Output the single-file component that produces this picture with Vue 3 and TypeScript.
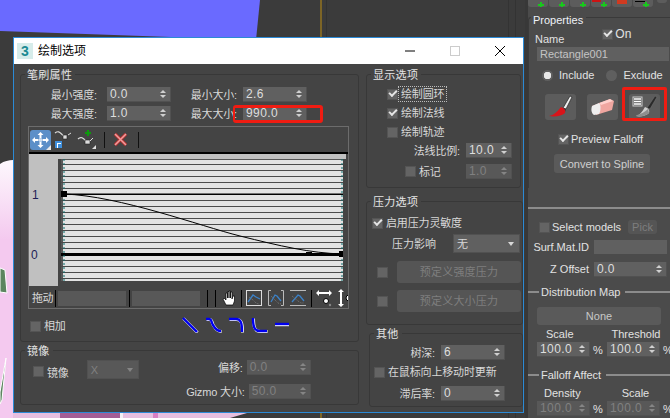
<script setup lang="ts">
const graphLines: number[] = Array.from({ length: 20 }, (_, i) => 163 + i * 6)
</script>

<template>
  <div class="stage">
    <svg class="scene" viewBox="0 0 670 418" width="670" height="418">
      <defs>
        <linearGradient id="pink" x1="0" y1="160" x2="0" y2="240" gradientUnits="userSpaceOnUse">
          <stop offset="0" stop-color="#fdf8fd" />
          <stop offset="1" stop-color="#f4c9ef" />
        </linearGradient>
      </defs>
      <rect width="670" height="418" fill="#3b3b3b" />
      <polygon points="0,0 260,0 256,40 0,31" fill="#6a6aff" />
      <rect x="320" y="0" width="2" height="418" fill="#7d6526" />
      <rect x="326" y="0" width="1" height="418" fill="#333" />
      <rect x="508" y="0" width="1" height="418" fill="#333" />
      <rect x="515" y="0" width="1" height="418" fill="#333" />
      <path d="M0 164C4 161 9 160 13 160V418H0z" fill="url(#pink)" />
      <polygon points="13,405 247,413 230,418 13,418" fill="#e6bfe0" />
      <rect x="60" y="413" width="60" height="5" fill="#a35f96" />
      <rect x="120" y="413" width="3" height="5" fill="#f4f0f4" />
      <rect x="153" y="413" width="5" height="5" fill="#d880c4" />
      <polygon points="0,268 5,270 7,293 0,292" fill="#5c8560" stroke="#fff" stroke-width="1" />
      <polygon points="0,392 6,358 2,400 0,404" fill="#5c8560" stroke="#fff" stroke-width="1" />
    </svg>

    <div class="dialog">
      <header class="title">
        <span class="logo">3</span>
        <span class="title-text">绘制选项</span>
        <span class="win-btns">
          <svg width="12" height="12" viewBox="0 0 12 12"><path d="M1 6h10" stroke="#000" /></svg>
          <svg width="12" height="12" viewBox="0 0 12 12"><rect x="1.5" y="1.5" width="9" height="9" fill="none" stroke="#ccc" /></svg>
          <svg width="12" height="12" viewBox="0 0 12 12"><path d="M1 1l10 10M11 1L1 11" stroke="#000" /></svg>
        </span>
      </header>

      <div class="dlg-body">
        <div class="col-left">
          <section class="group brush">
            <span class="legend">笔刷属性</span>
            <div class="brush-grid">
              <label class="lb lb1">最小强度:</label>
              <div class="spin">0.0</div>
              <label class="lb lb2">最小大小:</label>
              <div class="spin">2.6</div>
              <label class="lb lb1">最大强度:</label>
              <div class="spin">1.0</div>
              <label class="lb lb2">最大大小:</label>
              <div class="spin">990.0</div>
            </div>
            <span class="mark mark-size"></span>

            <div class="editor">
              <div class="ed-tools">
                <span class="tool-active">
                  <svg width="21" height="20" viewBox="0 0 21 20">
                    <path d="M10.5 2l3 3h-2v3.500h-2V5h-2zM10.500 18l3-3h-2v-3.500h-2V15h-2zM2 10l3-3v2h3.500v2H5v2zM19 10l-3-3v2h-3.500v2H16v2z" fill="#fff" />
                    <rect x="9" y="8.500" width="3" height="3" fill="#cfe0f2" />
                    <path d="M16 20l5-5v5z" fill="#e8e8e8" />
                  </svg>
                </span>
                <svg width="18" height="22" viewBox="0 0 18 22" class="t1">
                  <path d="M1 4c4-3 5 0 9 3" fill="none" stroke="#ddd" stroke-width="1.200" />
                  <rect x="9" y="6" width="4" height="4" fill="#ddd" stroke="#222" stroke-width=".6" />
                  <path d="M14 6l3-2" stroke="#ddd" />
                  <rect x="1" y="12" width="7" height="7" fill="#3f8fdc" />
                  <rect x="3" y="14" width="4" height="5" fill="#fff" />
                  <rect x="4" y="15" width="3" height="4" fill="#3f8fdc" />
                </svg>
                <svg width="20" height="22" viewBox="0 0 20 22" class="t2">
                  <path d="M1 10c3-3 5-1 8 2" fill="none" stroke="#ddd" stroke-width="1.200" />
                  <rect x="8" y="11" width="5" height="4" fill="#ddd" stroke="#222" stroke-width=".6" />
                  <path d="M13 12l3-3" stroke="#ddd" />
                  <path d="M10 1h2v2h2v2h-2v2h-2V5H8V3h2z" fill="#0c9a0c" />
                  <path d="M15 20l4-4v4z" fill="#e0e0e0" />
                </svg>
                <i class="vsep s1"></i>
                <svg width="15" height="15" viewBox="0 0 15 15" class="t3">
                  <path d="M2 2l11 11M13 2L2 13" stroke="#a33" stroke-width="3.400" />
                  <path d="M2 2l11 11M13 2L2 13" stroke="#f59a9a" stroke-width="1.600" />
                </svg>
                <i class="vsep s2"></i>
              </div>
              <svg class="plot" viewBox="29 153 317 132" width="317" height="132">
                <rect x="29" y="153" width="317" height="132" fill="#444" />
                <rect x="29" y="153" width="317" height="5" fill="#c0c0c0" />
                <rect x="29" y="153" width="29" height="132" fill="#c0c0c0" />
                <rect x="58" y="158" width="285" height="122" fill="#e2e2e2" />
                <rect x="61" y="158" width="2" height="122" fill="#5a5a5a" />
                <rect x="58" y="158" width="3" height="122" fill="#444" />
                <rect x="61" y="158" width="282" height="1" fill="#555" />
                <g v-for="y in graphLines" :key="y">
                  <rect x="61" :y="y" width="282" height="1" fill="#4a4a4a" />
                </g>
                <rect x="61" y="192.500" width="282" height="1.500" fill="#000" />
                <rect x="61" y="252" width="282" height="3" fill="#000" />
                <path d="M64 158v122M342 158v122" stroke="#0b6f6f" stroke-dasharray="2 2" />
                <path d="M64 193C120 195 200 225 240 235S310 252 342 253" fill="none" stroke="#000" />
                <rect x="61" y="190" width="6" height="6" fill="#000" />
                <rect x="339" y="250" width="4" height="6" fill="#000" />
                <rect x="306" y="251" width="6" height="3" fill="#000" />
                <text x="32" y="198" class="axis">1</text>
                <text x="31" y="258" class="axis">0</text>
              </svg>
              <div class="ed-bottom">
                <span class="drag">拖动</span>
                <i class="bsep"></i>
                <span class="field"></span>
                <i class="bsep b0"></i>
                <span class="field"></span>
                <i class="bsep b1"></i>
                <i class="bsep b2"></i>
                <svg class="hand" width="16" height="16" viewBox="0 0 16 16">
                  <path d="M4 15L1 9l1-1 2 2V3h1.500v5V1.500H7V8V1H8.500v7V2H10v7l1-3h1.500v5L11 15z" fill="#fff" stroke="#000" stroke-width=".7" />
                </svg>
                <i class="bsep b3"></i>
                <svg class="view" width="16" height="16" viewBox="0 0 16 16">
                  <rect x=".5" y=".5" width="15" height="15" fill="#444" stroke="#ddd" />
                  <path d="M2 12l5-7 3 2 4 2" fill="none" stroke="#3b82c9" stroke-width="1.300" />
                  <path d="M3 7l4 3 3 3 3 1" fill="none" stroke="#777" stroke-dasharray="1 1" />
                </svg>
                <svg class="view" width="16" height="16" viewBox="0 0 16 16">
                  <path d="M3 .5H.5v15H3M13 .5h2.500v15H13" fill="none" stroke="#bbb" />
                  <path d="M3 12l4-7 2 1 4 5" fill="none" stroke="#3b82c9" stroke-width="1.300" />
                  <path d="M3 6l4 4 3 3 3 1" fill="none" stroke="#777" stroke-dasharray="1 1" />
                </svg>
                <svg class="view" width="16" height="16" viewBox="0 0 16 16">
                  <path d="M0 .5h16M0 15.500h16" stroke="#bbb" />
                  <path d="M2 12l6-7 2 1 4 5" fill="none" stroke="#3b82c9" stroke-width="1.300" />
                  <path d="M2 6l6 5 3 2 3 0" fill="none" stroke="#777" stroke-dasharray="1 1" />
                </svg>
                <i class="bsep b4"></i>
                <svg class="fit1" width="16" height="18" viewBox="0 0 16 18">
                  <path d="M0 4l3-3v2h10V1l3 3-3 3V5H3v2z" fill="#fff" />
                  <circle cx="10" cy="12" r="2.500" fill="#fff" stroke="#000" />
                  <circle cx="14" cy="16" r="1.200" fill="#888" />
                </svg>
                <svg class="fit2" width="11" height="18" viewBox="0 0 11 18">
                  <path d="M3 0l3 3H4v12h2l-3 3-3-3h2V3H0z" fill="#fff" />
                  <path d="M11 6a3 3 0 0 0 0 6z" fill="#fff" stroke="#000" />
                </svg>
              </div>
            </div>

            <div class="add-row">
              <span class="chk"></span>
              <span class="chk-text">相加</span>
              <div class="shapes">
                <svg width="17" height="16" viewBox="0 0 17 16"><path d="M1 1l14 14" fill="none" stroke="#fff" stroke-width="3" transform="translate(.5 .5)" /><path d="M1 1l14 14" fill="none" stroke="#0000ee" stroke-width="2.400" /></svg>
                <svg width="17" height="16" viewBox="0 0 17 16"><path d="M1 2h3c3 0 2 3 4 6s3 6 8 6" fill="none" stroke="#fff" stroke-width="3" transform="translate(.5 .5)" /><path d="M1 2h3c3 0 2 3 4 6s3 6 8 6" fill="none" stroke="#0000ee" stroke-width="2.400" /></svg>
                <svg width="17" height="16" viewBox="0 0 17 16"><path d="M1 2h7c5 0 6 4 6 13" fill="none" stroke="#fff" stroke-width="3" transform="translate(.5 .5)" /><path d="M1 2h7c5 0 6 4 6 13" fill="none" stroke="#0000ee" stroke-width="2.400" /></svg>
                <svg width="17" height="16" viewBox="0 0 17 16"><path d="M2 1c0 8 1 13 7 13h7" fill="none" stroke="#fff" stroke-width="3" transform="translate(.5 .5)" /><path d="M2 1c0 8 1 13 7 13h7" fill="none" stroke="#0000ee" stroke-width="2.400" /></svg>
                <svg width="16" height="16" viewBox="0 0 16 16"><path d="M1 7h14" fill="none" stroke="#fff" stroke-width="3" transform="translate(0 .7)" /><path d="M1 7h14" fill="none" stroke="#0000ee" stroke-width="2.400" /></svg>
              </div>
            </div>
          </section>

          <section class="group mirror">
            <span class="legend">镜像</span>
            <div class="mirror-grid">
              <div class="mirror-left">
                <span class="chk"></span>
                <span class="chk-text">镜像</span>
                <div class="drop dis m-drop">X</div>
              </div>
              <div class="mirror-right">
                <div class="mr-row"><label class="lb">偏移:</label><div class="spin dis">0.0</div></div>
                <div class="mr-row"><label class="lb">Gizmo 大小:</label><div class="spin dis gz">50.0</div></div>
              </div>
            </div>
          </section>
        </div>

        <div class="col-right">
          <section class="group display">
            <span class="legend">显示选项</span>
            <div class="check-row"><span class="chk on"></span><span class="chk-text focus">绘制圆环</span></div>
            <div class="check-row"><span class="chk on"></span><span class="chk-text">绘制法线</span></div>
            <div class="check-row"><span class="chk"></span><span class="chk-text">绘制轨迹</span></div>
            <div class="scale-row"><label class="lb">法线比例:</label><div class="spin s46">10.0</div></div>
            <div class="mark-row">
              <span class="chk"></span><span class="chk-text">标记</span>
              <div class="spin s46 dis">1.0</div>
            </div>
          </section>

          <section class="group pressure">
            <span class="legend">压力选项</span>
            <div class="press-check"><span class="chk on"></span><span class="chk-text">启用压力灵敏度</span></div>
            <div class="press-drop"><label class="lb">压力影响</label><div class="drop p-drop">无</div></div>
            <div class="press-btn"><span class="chk"></span><button class="btn dis-btn">预定义强度压力</button></div>
            <div class="press-btn second"><span class="chk"></span><button class="btn dis-btn">预定义大小压力</button></div>
          </section>

          <section class="group other">
            <span class="legend">其他</span>
            <div class="oth-row"><label class="lb">树深:</label><div class="spin">6</div></div>
            <div class="press-check oth-check"><span class="chk"></span><span class="chk-text">在鼠标向上移动时更新</span></div>
            <div class="oth-row last"><label class="lb">滞后率:</label><div class="spin">0</div></div>
          </section>
        </div>
      </div>
    </div>

    <aside class="panel">
      <div class="top-btns">
        <span class="tb"><i class="plus"></i></span>
        <span class="tb"><i class="plus"></i></span>
        <span class="tb"><i class="plus"></i></span>
        <span class="tb"><i class="red"></i><i class="plus"></i></span>
        <span class="tb"><i class="red2"></i></span>
        <span class="tb"><i class="lines"></i><i class="plus"></i></span>
        <span class="tb small"></span>
      </div>

      <section class="props">
        <span class="legend plegend">Properties</span>
        <div class="name-row">
          <span class="name">Name</span>
          <span class="on-wrap"><span class="chk on"></span><span class="ptext on-t">On</span></span>
        </div>
        <div class="inp name-inp">Rectangle001</div>
        <div class="radio-row">
          <span class="radio sel"></span><span class="ptext inc">Include</span>
          <span class="radio ex"></span><span class="ptext">Exclude</span>
        </div>
        <div class="tool-row">
          <span class="tool">
            <svg width="31" height="26" viewBox="0 0 31 26">
              <path d="M25 2l2 1-6 12-3-1z" fill="#eee" stroke="#222" stroke-width=".7" />
              <path d="M18 14l3 1-1 3z" fill="#333" />
              <path d="M16 13c3 1 5 3 4 6-3 3-10 4-16 3 5-1 8-4 12-9z" fill="#d8141a" />
            </svg>
          </span>
          <span class="tool">
            <svg width="31" height="26" viewBox="0 0 31 26">
              <path d="M5 12l18-7 4 2-2 9-16 5z" fill="#f0a6a0" />
              <path d="M5 12l7-3c2 1 2 8 0 11l-5 1c-3-2-3-6-2-9z" fill="#eee" />
              <path d="M12 9l11-4 3 2-12 4z" fill="#ffd0cc" />
            </svg>
          </span>
          <span class="tool">
            <svg width="31" height="26" viewBox="0 0 31 26">
              <rect x="4" y="3" width="9" height="9" fill="#555" stroke="#ccc" />
              <path d="M5 5h7M5 7.500h7M5 10h7" stroke="#fff" stroke-width="1.300" />
              <path d="M26 2l2 1-7 12-3-1z" fill="#2a2a2a" stroke="#777" stroke-width=".5" />
              <path d="M16 13c3 1 5 3 4 6-3 3-9 4-13 3 4-1 6-4 9-9z" fill="#cfcfcf" />
              <path d="M8 21c4-1 8-3 11-6l1 4c-3 3-9 4-13 3z" fill="#8e8e8e" />
            </svg>
          </span>
        </div>
        <div class="preview"><span class="chk on"></span><span class="ptext">Preview Falloff</span></div>
        <button class="btn convert">Convert to Spline</button>
      </section>

      <div class="pbar"></div>

      <div class="sel-row"><span class="chk"></span><span class="ptext">Select models</span><button class="btn pick">Pick</button></div>
      <div class="f-row f1"><span class="ptext f-lb">Surf.Mat.ID</span><div class="inp f-inp"></div></div>
      <div class="f-row f2"><span class="ptext f-lb">Z Offset</span><div class="spin f-inp">0.0</div></div>

      <div class="rule r1"><span>Distribution Map</span></div>
      <button class="btn none">None</button>
      <div class="two heads"><span class="ptext h1">Scale</span><span class="ptext h2">Threshold</span></div>
      <div class="two vals">
        <div class="spin s53">100.0</div><span class="pct">%</span>
        <div class="spin s53">100.0</div><span class="pct">%</span>
      </div>

      <div class="rule r2"><span>Falloff Affect</span></div>
      <div class="two heads h-b"><span class="ptext h3">Density</span><span class="ptext h4">Scale</span></div>
      <div class="two vals v-b">
        <div class="spin s53 dis">100.0</div><span class="pct">%</span>
        <div class="spin s53 dis">100.0</div><span class="pct">%</span>
      </div>
    </aside>

    <span class="mark mark-tool"></span>
  </div>
</template>

<style scoped>
.stage {
  position: relative;
  width: 670px;
  height: 418px;
  overflow: hidden;
  font-family: "Liberation Sans", "Noto Sans CJK SC", sans-serif;
  font-size: 11px;
  color: #d8d8d8;
  line-height: 14px;
}
.scene { position: absolute; inset: 0; display: block; }

/* dialog */
.dialog {
  position: absolute;
  left: 13px;
  top: 37px;
  width: 511px;
  height: 376px;
  box-sizing: border-box;
  border: 1px solid #2b8ad6;
  background: #444;
}
.title {
  height: 26px;
  background: #fff;
  display: flex;
  align-items: center;
  color: #000;
  padding-left: 3px;
}
.logo {
  width: 16px;
  height: 16px;
  background: #d6ecea;
  color: #1b8a92;
  font: 700 14px/16px "Liberation Sans", sans-serif;
  text-align: center;
}
.title-text { font-size: 12px; margin-left: 5px; }
.win-btns { margin-left: auto; display: flex; gap: 33px; padding-right: 17px; }
.win-btns svg { display: block; }

.dlg-body {
  display: grid;
  grid-template-columns: 339px 157px;
  column-gap: 7px;
  padding: 10px 0 0 6px;
}
.group {
  position: relative;
  box-sizing: border-box;
  border: 1px solid #383838;
  border-radius: 3px;
}
.legend {
  position: absolute;
  left: 4px;
  top: -7px;
  padding: 0 3px 0 2px;
  background: #444;
  color: #e4e4e4;
  font-size: 11px;
  letter-spacing: .3px;
}
.lb { letter-spacing: -.15px; white-space: nowrap; }
.col-left { display: flex; flex-direction: column; gap: 8px; }
.brush { height: 268px; }
.brush-grid {
  display: grid;
  grid-template-columns: 86px 64px 72px 64px;
  row-gap: 4px;
  padding-top: 12px;
  align-items: center;
}
.lb1 { text-align: right; padding-right: 10px; }
.lb2 { text-align: right; padding-right: 6px; }

.spin {
  position: relative;
  box-sizing: border-box;
  height: 15px;
  line-height: 15px;
  padding-left: 3px;
  background: #606060;
  border: 1px solid #515151;
  border-width: 0 1px 1px 0;
  color: #dedede;
  font: 12px/15px "Liberation Sans", sans-serif;
  letter-spacing: .4px;
}
.spin::before, .spin::after {
  content: "";
  position: absolute;
  right: 4px;
  width: 0;
  height: 0;
  border-left: 3px solid transparent;
  border-right: 3px solid transparent;
}
.spin::before { top: 3px; border-bottom: 3px solid #d0d0d0; }
.spin::after { top: 8px; border-top: 3px solid #d0d0d0; }
.spin.dis { color: #808080; background: #585858; }
.spin.dis::before { border-bottom-color: #858585; }
.spin.dis::after { border-top-color: #858585; }

.mark {
  position: absolute;
  box-sizing: border-box;
  border: 3px solid #f01c12;
  border-radius: 3px;
}
.mark-size { left: 212px; top: 30px; width: 90px; height: 18px; border-left-width: 2px; }
.mark-tool { left: 622px; top: 87px; width: 45px; height: 34px; border-radius: 2px; }

.editor {
  box-sizing: border-box;
  margin: 5px 0 0 7px;
  width: 321px;
  height: 183px;
  border: 1px solid #6c6c6c;
  background: #444;
}
.ed-tools {
  height: 25px;
  display: flex;
  align-items: center;
  border-bottom: 2px solid #000;
  box-sizing: content-box;
  padding-left: 1px;
}
.tool-active {
  width: 21px;
  height: 20px;
  background: #5c8fc8;
  border-radius: 3px;
}
.tool-active svg { display: block; }
.t1 { margin-left: 3px; }
.t2 { margin-left: 5px; }
.vsep { width: 1px; height: 16px; background: #111; }
.s1 { margin-left: 7px; }
.t3 { margin-left: 8px; }
.s2 { margin-left: 10px; }
.plot { display: block; }
.axis { font: 12px "Liberation Sans", sans-serif; fill: #1d1d55; }
.ed-bottom {
  height: 24px;
  display: flex;
  align-items: center;
  padding-left: 3px;
  overflow: hidden;
}
.drag { letter-spacing: -.5px; width: 21px; flex: none; }
.bsep { flex: none; width: 1px; height: 17px; background: #000; margin-left: 2px; }
.field { flex: none; width: 68px; height: 15px; margin-left: 2px; background: #585858; }
.b0 { margin-left: 3px; }
.b1 { margin-left: 7px; }
.b2 { margin-left: 7px; }
.hand { flex: none; margin-left: 6px; }
.b3 { margin-left: 3px; }
.view { flex: none; margin-left: 6px; }
.b3 + .view { margin-left: 4px; }
.b4 { margin-left: 5px; }
.fit1 { flex: none; margin-left: 4px; }
.fit2 { flex: none; margin-left: 6px; }

.add-row {
  display: flex;
  align-items: center;
  height: 16px;
  margin: 9px 0 0 9px;
}
.chk {
  flex: none;
  position: relative;
  display: inline-block;
  box-sizing: border-box;
  width: 11px;
  height: 11px;
  background: #646464;
  border: 1px solid #545454;
}
.chk.on::after {
  content: "";
  position: absolute;
  left: 1px;
  top: 0;
  width: 6px;
  height: 3px;
  border-left: 2px solid #e6e6e6;
  border-bottom: 2px solid #e6e6e6;
  transform: rotate(-45deg);
}
.chk-text { margin-left: 3px; white-space: nowrap; letter-spacing: -.15px; }
.shapes { display: flex; gap: 6px; margin-left: 116px; transform: translateY(-1px); }
.shapes svg { display: block; }

.mirror { height: 55px; }
.mirror-grid { display: flex; padding-top: 9px; }
.mirror-left { display: flex; align-items: flex-start; padding: 6px 0 0 12px; }
.m-drop { margin: -6px 0 0 18px; width: 52px; }
.mirror-right { display: flex; flex-direction: column; gap: 9px; margin-left: 65px; align-items: flex-end; width: 107px; }
.mr-row { display: flex; gap: 4px; align-items: center; }
.mr-row .spin { width: 64px; }
.mr-row .spin.gz { width: 62px; }
.drop {
  position: relative;
  box-sizing: border-box;
  height: 19px;
  line-height: 19px;
  padding-left: 3px;
  background: #606060;
  border: 1px solid #515151;
}
.drop::after {
  content: "";
  position: absolute;
  right: 5px;
  top: 7px;
  width: 0;
  height: 0;
  border-left: 3px solid transparent;
  border-right: 3px solid transparent;
  border-top: 4px solid #d8d8d8;
}
.drop.dis { color: #808080; background: #585858; }
.drop.dis::after { border-top-color: #858585; }

.col-right { display: flex; flex-direction: column; }
.display { height: 114px; width: 155px; }
.check-row { display: flex; align-items: center; height: 14px; padding-left: 20px; }
.check-row:nth-of-type(1) { margin-top: 12px; }
.check-row + .check-row { margin-top: 5px; }
.focus { outline: 1px dotted #bbb; outline-offset: 0; padding: 0 2px; margin-left: 1px; }
.scale-row { display: flex; justify-content: flex-end; align-items: center; gap: 6px; margin-top: 4px; padding-right: 8px; }
.s46 { width: 46px; flex: none; }
.mark-row { display: flex; align-items: center; margin-top: 6px; padding: 0 8px 0 38px; }
.mark-row .spin { margin-left: auto; }
.pressure { height: 124px; margin-top: 13px; }
.press-check { display: flex; align-items: center; height: 14px; padding: 14px 0 0 5px; box-sizing: content-box; }
.press-drop { display: flex; align-items: center; margin: 4px 0 0 25px; }
.press-drop .lb { letter-spacing: 0; }
.p-drop { width: 67px; margin-left: 17px; }
.press-btn { display: flex; align-items: center; margin: 8px 0 0 10px; }
.press-btn.second { margin-top: 7px; }
.press-btn .btn { margin-left: 9px; width: 124px; height: 22px; }
.btn {
  box-sizing: border-box;
  display: block;
  padding: 0;
  border: 0;
  border-radius: 3px;
  background: #5a5a5a;
  color: #dcdcdc;
  font: inherit;
}
.btn.dis-btn { color: #7e7e7e; background: #555; letter-spacing: .2px; }
.other { width: 154px; height: 74px; margin: 8px 0 0 3px; }
.oth-row { display: flex; align-items: center; justify-content: flex-end; gap: 6px; padding: 11px 17px 0 0; }
.oth-row .spin { width: 64px; }
.oth-check { padding: 5px 0 0 4px; }
.oth-row.last { padding-top: 7px; }

/* right panel */
.panel {
  position: absolute;
  left: 525px;
  top: 0;
  width: 145px;
  height: 418px;
  box-sizing: border-box;
  border-left: 3px solid #383838;
  background: #4b4b4b;
  font-family: "Liberation Sans", sans-serif;
  font-size: 11px;
  color: #e2e2e2;
}
.top-btns { display: flex; gap: 1px; height: 7px; overflow: hidden; }
.tb {
  position: relative;
  flex: none;
  width: 20px;
  height: 7px;
  background: #5c5c5c;
  border-radius: 0 0 3px 3px;
}
.tb.small { width: 10px; margin-left: 3px; height: 3px; }
.plus {
  position: absolute;
  right: 4px;
  bottom: 1px;
  width: 6px;
  height: 2px;
  background: #18c81c;
}
.plus::after {
  content: "";
  position: absolute;
  left: 2px;
  top: -2px;
  width: 2px;
  height: 6px;
  background: #18c81c;
}
.red { position: absolute; left: 1px; top: 0; width: 9px; height: 2px; background: #cc1414; }
.red2 { position: absolute; left: 5px; top: 0; width: 10px; height: 4px; background: #d03a20; }
.lines { position: absolute; left: 2px; top: 1px; width: 10px; height: 5px; border-top: 1px solid #000; border-bottom: 1px solid #000; }

.props { position: relative; margin-top: 10px; height: 170px; border: 1px solid #3a3a3a; border-right: 0; border-bottom: 0; border-radius: 3px 0 0 0; }
.plegend { background: #4b4b4b; color: #eef2f8; font-size: 11px; letter-spacing: 0; top: -5px; left: 2px; }
.name-row { display: flex; height: 17px; padding: 11px 0 0 6px; box-sizing: content-box; }
.name { align-self: flex-end; }
.on-wrap { display: flex; align-items: flex-start; margin-left: 38px; gap: 2px; }
.on-t { margin-top: -2px; font-size: 12px; }
.ptext { white-space: nowrap; }
.inp { box-sizing: border-box; height: 14px; background: #606060; line-height: 14px; padding-left: 3px; }
.name-inp { margin: 1px 0 0 8px; width: 132px; color: #c4c4c4; }
.radio-row { display: flex; align-items: center; height: 14px; margin: 7px 0 0 13px; }
.radio { width: 11px; height: 11px; border-radius: 50%; background: #5f5f5f; flex: none; }
.radio.sel { background: radial-gradient(circle, #e8e8e8 0 3.500px, #5f5f5f 4px); }
.inc { margin-left: 6px; }
.radio.ex { margin: 0 6px 0 12px; }
.tool-row { display: flex; gap: 11px; margin: 12px 0 0 16px; }
.tool { width: 31px; height: 26px; background: #5c5c5c; border-radius: 3px; }
.tool svg { display: block; }
.preview { display: flex; align-items: center; gap: 2px; height: 14px; margin: 12px 0 0 29px; }
.convert { margin: 8px 0 0 25px; width: 96px; height: 19px; color: #cfcfcf; }
.pbar { height: 2px; margin-top: 19px; background: #8c8c8c; }

.sel-row { display: flex; align-items: center; height: 16px; margin: 10px 13px 0 11px; }
.sel-row .ptext { margin-left: 2px; }
.pick { margin-left: auto; width: 29px; height: 14px; font-size: 11px; color: #7e7e7e; background: #555; }
.f-row { display: flex; align-items: center; height: 14px; }
.f-lb { width: 61px; text-align: right; flex: none; }
.f-inp { margin-left: 5px; width: 73px; }
.f1 { margin-top: 5px; }
.f2 { margin-top: 8px; }
.rule { display: flex; align-items: center; height: 14px; margin-top: 9px; font-size: 11px; }
.rule::before { content: ""; width: 11px; height: 2px; background: #8c8c8c; margin-right: 2px; }
.rule::after { content: ""; flex: 1; height: 2px; background: #8c8c8c; margin-left: 5px; }
.none { margin: 8px 0 0 9px; width: 124px; height: 18px; color: #c8c8c8; }
.two { display: flex; align-items: center; }
.heads { height: 14px; margin-top: 2px; }
.h1 { margin-left: 18px; }
.h2 { margin-left: 38px; }
.vals { margin: 1px 0 0 9px; }
.s53 { width: 53px; flex: none; }
.pct { width: 17px; padding-left: 3px; box-sizing: border-box; flex: none; }
.r2 { margin-top: 11px; }
.h-b { margin-top: 4px; }
.h3 { margin-left: 16px; }
.h4 { margin-left: 41px; }
.v-b { margin-top: 1px; }
</style>
